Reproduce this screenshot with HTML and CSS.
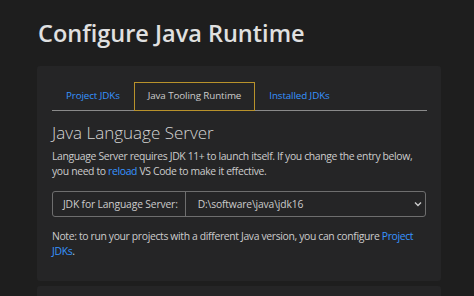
FILE: index.html
```html
<!DOCTYPE html>
<html lang="en">
<head>
  <meta charset="UTF-8">
  <title>Configure Java Runtime</title>
  <link rel="stylesheet" href="styles.css">
</head>
<body>

<div class="page">
  <h1 class="title">Configure Java Runtime</h1>

  <section class="card">
    <div class="tabs">
      <a class="tab">Project JDKs</a>
      <a class="tab active">Java Tooling Runtime</a>
      <a class="tab">Installed JDKs</a>
    </div>

    <div class="panel">
      <h2>Java Language Server</h2>
      <p>Language Server requires JDK 11+ to launch itself. If you change the entry below, you need to <a class="link">reload</a> VS Code to make it effective.</p>

      <div class="field">
        <label class="field-label">JDK for Language Server:</label>
        <div class="field-select">
          <span>D:\software\java\jdk16</span>
          <svg class="chevron" width="10" height="10" viewBox="0 0 10 10">
            <path d="M2 3.5 L5 6.5 L8 3.5" fill="none" stroke="#cccccc" stroke-width="1.4"/>
          </svg>
        </div>
      </div>

      <p class="note">Note: to run your projects with a different Java version, you can configure <a class="link">Project JDKs</a>.</p>
    </div>
  </section>

  <section class="card"></section>
</div>

</body>
</html>
```

FILE: styles.css
```css
body {
  margin: 0;
  padding: 0;
  font-family: 'Open Sans', 'Noto Sans', sans-serif;
  background-color: #1e1e1e;
  color: #cccccc;
  height: 296px;
  overflow: hidden;
}

.page {
  padding: 0 33px 0 37px;
}

.title {
  margin: 0;
  padding: 17px 0 0 1px;
  height: 49px;
  font-size: 23.5px;
  font-weight: 600;
  color: #e0e0e0;
  line-height: 32px;
}

.card {
  background-color: #252526;
  border-radius: 3px;
  padding: 16px 14px 22px 15px;
  margin-bottom: 5px;
  min-height: 60px;
}

.tabs {
  display: flex;
  border-bottom: 1px solid #8a8a8a;
  height: 28px;
}

.tab {
  font-size: 9.8px;
  letter-spacing: -0.1px;
  line-height: 26px;
  padding: 0 13px;
  color: #3794ff;
  border: 1px solid transparent;
  cursor: pointer;
}

.tab.active {
  color: #cccccc;
  border-color: #b8922b;
  margin-bottom: -1px;
}

.panel h2 {
  margin: 10px 0 4px;
  font-size: 17px;
  font-weight: 300;
  line-height: 24px;
  color: #d4d4d4;
}

.panel p {
  margin: 0;
  font-size: 10.4px;
  letter-spacing: -0.35px;
  line-height: 15px;
}

.link {
  color: #3794ff;
  cursor: pointer;
}

.field {
  display: flex;
  margin: 12px 1px 12px 0;
  height: 24px;
  border: 1px solid #6e6e6e;
  border-radius: 3px;
  font-size: 10.3px;
  letter-spacing: -0.15px;
  line-height: 24px;
}

.field-label {
  padding: 0 7px 0 10px;
  border-right: 1px solid #6e6e6e;
}

.field-select {
  flex: 1;
  display: flex;
  align-items: center;
  justify-content: space-between;
  padding: 0 2px 0 12px;
}
```
